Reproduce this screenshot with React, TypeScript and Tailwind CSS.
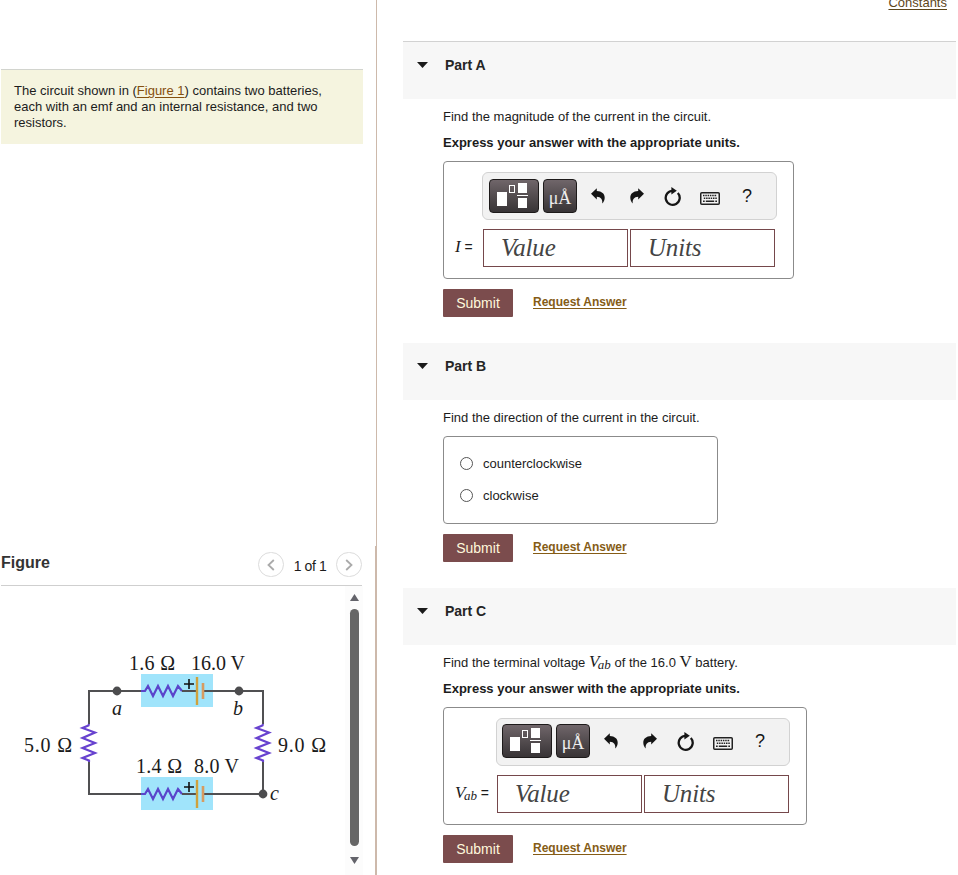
import { useState, type ReactNode } from "react";

const UndoIcon = ({ flip = false }: { flip?: boolean }) => (
    <svg width="14" height="16" viewBox="0 0 14 16" className={flip ? "-scale-x-100" : ""} aria-hidden="true">
        <path d="M5.8 0.2V3.1C10.8 3.3 13.7 5.8 13.7 9.8C13.7 11.9 12.9 14 11.2 15.6C11.8 11.5 10 9 5.8 8.8V11.4L0 5.8Z" fill="#151515" />
    </svg>
);

const ResetIcon = () => (
    <svg width="18" height="19" viewBox="0 0 18 19" aria-hidden="true">
        <path d="M8.7 3.8A7 7 0 1 0 13.8 6" fill="none" stroke="#151515" strokeWidth="2.3" />
        <path d="M7.4 0L12.8 3.8L7.4 7.6Z" fill="#151515" />
    </svg>
);

const KeyboardIcon = () => (
    <svg width="20" height="13" viewBox="0 0 20 13" aria-hidden="true">
        <rect x="0.75" y="0.75" width="18.5" height="11.5" rx="1" fill="#f5f5f5" stroke="#222" strokeWidth="1.5" />
        <path d="M3 3.5H17M3.8 6.2H17" stroke="#222" strokeWidth="1.4" strokeDasharray="1.5 0.8" />
        <path d="M3 9.2H4.7M5.8 9.2H14.2M15.3 9.2H17" stroke="#222" strokeWidth="1.6" />
    </svg>
);

const TemplateIcon = () => (
    <svg width="34" height="28" viewBox="0 0 34 28" aria-hidden="true">
        <rect x="0" y="10" width="10" height="14" fill="#fff" />
        <rect x="12.5" y="3.5" width="5" height="7" fill="none" stroke="#fff" strokeWidth="1" />
        <path d="M21 1H30V11H21ZM20 13H31V14H20ZM21 16H30V26H21Z" fill="#fff" />
    </svg>
);

const Toolbar = ({ wide }: { wide: boolean }) => (
    <div className={`flex h-[48px] items-center rounded-md border border-[#d2d2d2] bg-[#f2f2f2] ${wide ? "w-[294px] pb-0.5 pl-[5px]" : "w-[295px] pl-1.5"}`}>
        <button type="button" className="flex h-[34px] w-[50px] items-center justify-center rounded border border-[#1d1a1a] bg-linear-to-b from-[#70666a] to-[#383436]">
            <TemplateIcon />
        </button>
        <button type="button" className="ml-1 flex h-[34px] w-[34px] items-center justify-center rounded border border-[#1d1a1a] bg-linear-to-b from-[#70666a] to-[#383436] pt-1 font-['Liberation_Serif',serif] text-[18px] leading-none text-[#eee]">
            μÅ
        </button>
        <button type="button" className="ml-[14px]"><UndoIcon /></button>
        <button type="button" className="ml-[25px]"><UndoIcon flip /></button>
        <button type="button" className="ml-[20px]"><ResetIcon /></button>
        <button type="button" className="ml-[18px] pt-1"><KeyboardIcon /></button>
        <button type="button" className="ml-[22px] text-[18px] leading-none text-[#151515]">?</button>
    </div>
);

const AnswerBox = ({ label, wide = false }: { label: ReactNode; wide?: boolean }) => (
    <div className={`flex h-[118px] rounded border border-[#8b8b8b] pt-[10px] ${wide ? "w-[364px]" : "w-[351px]"}`}>
        <div className={`shrink-0 pt-[65px] pl-[11px] text-[14px] leading-[20px] ${wide ? "w-[52px]" : "w-[38px]"}`}>
            {label}
        </div>
        <div>
            <Toolbar wide={wide} />
            <div className="mt-[9px] ml-px flex gap-0.5 font-['Liberation_Serif',serif] text-[25px] italic leading-[36px] tracking-[-0.2px] text-[#444]">
                <div className="h-[38px] w-[145px] border border-[#75484b] bg-white pl-[17px]">Value</div>
                <div className="h-[38px] w-[145px] border border-[#75484b] bg-white pl-[17px]">Units</div>
            </div>
        </div>
    </div>
);

const SubmitRow = () => (
    <div className="mt-[10px] flex h-[28px] items-center gap-5">
        <button type="button" className="h-[28px] w-[70px] rounded-[1px] bg-[#7b4c4d] text-[14px] text-[#fff8dc]">Submit</button>
        <a href="#" className="-mt-0.5 text-[12px] font-bold text-[#855c16] underline underline-offset-2">Request Answer</a>
    </div>
);

const Part = ({ title, first = false, children }: { title: string; first?: boolean; children: ReactNode }) => (
    <section>
        <div className={`mr-0.5 flex bg-[#f7f7f7] pt-[13px] pl-[14px] ${first ? "h-[58px] border-t border-[#d2d2d2]" : "h-[57px]"}`}>
            <svg width="11" height="6" viewBox="0 0 11 6" className="mt-[7px]" aria-hidden="true">
                <path d="M0 0H11L5.5 6Z" fill="#1b1b1b" />
            </svg>
            <h2 className="ml-[17px] text-[14px] font-bold leading-[20px] text-[#252525]">{title}</h2>
        </div>
        <div className="pl-10 text-[13px] leading-[16px] text-[#1c1c1c]">{children}</div>
    </section>
);

const Vab = () => (
    <span className="inline-flex h-[16px] items-baseline font-['Liberation_Serif',serif] text-[17px] italic leading-[16px]">
        <span className="tracking-[-1.5px]">V</span>
        <span className="mt-[3px] text-[13px] leading-[16px] [transform:translateY(2px)]">ab</span>
    </span>
);

const Branch = ({ y }: { y: number }) => (
    <g>
        <rect x="141" y={y - 17} width="72" height="33" fill="#a0e4fb" />
        <path d={`M141 ${y}H145L148 ${y - 5}L153 ${y + 5}L158 ${y - 5}L163 ${y + 5}L168 ${y - 5}L173 ${y + 5}L178 ${y - 5}L182 ${y}`} fill="none" stroke="#5a45cb" strokeWidth="2.2" />
        <path d={`M182 ${y}H196M204 ${y}H213`} stroke="#505052" strokeWidth="2" />
        <path d={`M184 ${y - 7}H194M189 ${y - 12}V${y - 2}`} stroke="#111" strokeWidth="1.6" />
        <path d={`M197 ${y - 14}V${y + 14}`} stroke="#cfa13d" strokeWidth="2.4" />
        <path d={`M203 ${y - 8}V${y + 8}`} stroke="#d79b60" strokeWidth="2.6" />
    </g>
);

const Circuit = () => (
    <svg width="345" height="289" viewBox="0 586 345 289" role="img" aria-label="Circuit with two batteries and two resistors">
        <g fill="none" stroke="#505052" strokeWidth="2">
            <path d="M141 691H89V724M89 762V794H141M213 691H263V724M263 762V794H213" />
        </g>
        <g fill="none" stroke="#6843cf" strokeWidth="2.2">
            <path d="M89 724L88.5 725.5L82.5 728L95 732.5L82.5 738L95 743L82.5 748L95 753L82.5 758L89 760.5V762" />
            <path d="M263 724L262.5 725.5L256.5 728L269 732.5L256.5 738L269 743L256.5 748L269 753L256.5 758L263 760.5V762" />
        </g>
        <Branch y={691} />
        <Branch y={794} />
        <g fill="#4c4c4e">
            <circle cx="117" cy="691" r="4.4" />
            <circle cx="239" cy="691" r="4.4" />
            <circle cx="263" cy="794" r="4.4" />
        </g>
        <g className="font-['Liberation_Serif',serif] text-[20px]" fill="#1b1b1b">
            <text x="129" y="670" textLength="46">1.6 Ω</text>
            <text x="191" y="670" textLength="54">16.0 V</text>
            <text x="24" y="752" textLength="48">5.0 Ω</text>
            <text x="278" y="752" textLength="48">9.0 Ω</text>
            <text x="136" y="773" textLength="46">1.4 Ω</text>
            <text x="194" y="773" textLength="45">8.0 V</text>
            <g className="italic">
                <text x="112" y="715">a</text>
                <text x="233" y="715">b</text>
                <text x="270" y="800">c</text>
            </g>
        </g>
    </svg>
);

const PagerButton = ({ next = false }: { next?: boolean }) => (
    <button type="button" className="flex h-[25px] w-[26px] items-center justify-center rounded-full border border-[#dcdcdc]" aria-label={next ? "Next figure" : "Previous figure"}>
        <svg width="8" height="12" viewBox="0 0 8 12" aria-hidden="true" className={next ? "-scale-x-100" : ""}>
            <path d="M6.8 1L1.5 6L6.8 11" fill="none" stroke="#aaa" strokeWidth="1.8" />
        </svg>
    </button>
);

const App = () => {
    const [direction, setDirection] = useState<string>("");

    return (
        <main className="flex h-[875px] w-[958px] overflow-hidden bg-white font-['Liberation_Sans',Arial,sans-serif] text-[13px] text-[#1c1c1c]">
            <aside className="flex h-full w-[375px] shrink-0 flex-col">
                <div className="mt-[69px] ml-px h-[75px] w-[362px] border-t border-[#d2d4ce] bg-[#f5f4df] px-[13px] pt-[13px] leading-[16px]">
                    The circuit shown in (<a href="#" className="text-[#85500f] underline underline-offset-2">Figure 1</a>) contains two batteries,
                    <br />each with an emf and an internal resistance, and two
                    <br />resistors.
                </div>
                <div className="mt-[402px] ml-px flex h-[40px] w-[361px] items-start border-b border-[#cfcfcf]">
                    <h2 className="grow pt-[7px] text-[16px] font-bold leading-[20px] text-[#333]">Figure</h2>
                    <div className="flex items-center pt-[6px]">
                        <PagerButton />
                        <span className="w-[52px] pt-[3px] text-center text-[14px] tracking-[-0.4px]">1 of 1</span>
                        <PagerButton next />
                    </div>
                </div>
                <div className="flex h-[289px]">
                    <Circuit />
                    <div className="flex w-[18px] flex-col items-center bg-[#fcfcfc] pt-[8px]">
                        <svg width="9" height="7" viewBox="0 0 9 7" aria-hidden="true"><path d="M0 7L4.5 0L9 7Z" fill="#63636a" /></svg>
                        <div className="mt-[8px] h-[237px] w-[9px] rounded-full bg-[#666]" />
                        <svg width="9" height="7" viewBox="0 0 9 7" className="mt-[11px]" aria-hidden="true"><path d="M0 0H9L4.5 7Z" fill="#63636a" /></svg>
                    </div>
                </div>
            </aside>

            <div className="flex w-[2px] shrink-0 flex-col items-end">
                <div className="h-[546px] w-px bg-[#cdb9ab]" />
                <div className="w-[2px] grow bg-[#cdb9ab]" />
            </div>

            <div className="ml-[26px] grow">
                <div className="flex h-[41px] justify-end pr-[11px]">
                    <a href="#" className="-mt-[5px] h-[16px] leading-[16px] text-[#5d461b] underline underline-offset-2">Constants</a>
                </div>

                <Part title="Part A" first>
                    <p className="pt-[10px]">Find the magnitude of the current in the circuit.</p>
                    <p className="mt-[10px] mb-[10px] font-bold">Express your answer with the appropriate units.</p>
                    <AnswerBox label={<><i className="font-['Liberation_Serif',serif] text-[17px]">I</i> =</>} />
                    <SubmitRow />
                </Part>

                <div className="mt-[26px]">
                    <Part title="Part B">
                        <p className="pt-[10px]">Find the direction of the current in the circuit.</p>
                        <div className="mt-[10px] flex h-[88px] w-[275px] flex-col gap-4 rounded border border-[#8b8b8b] pt-[19px] pl-[16px]">
                            {
                                ["counterclockwise", "clockwise"].map((option) => (
                                    <label className="flex h-[16px] items-center gap-[10px]" key={option}>
                                        <input type="radio" name="direction" className="-mt-px h-[13px] w-[13px] appearance-none rounded-full border border-[#555] bg-white checked:border-4" checked={direction === option} onChange={() => setDirection(option)} />
                                        {option}
                                    </label>
                                ))
                            }
                        </div>
                        <SubmitRow />
                    </Part>
                </div>

                <div className="mt-[26px]">
                    <Part title="Part C">
                        <p className="flex h-[26px] items-baseline gap-[3.6px] whitespace-nowrap pt-[7px]">
                            <span>Find the terminal voltage</span>
                            <Vab />
                            <span>of the 16.0</span>
                            <span className="font-['Liberation_Serif',serif] text-[17px] leading-[16px]">V</span>
                            <span>battery.</span>
                        </p>
                        <p className="mt-[10px] mb-[10px] font-bold">Express your answer with the appropriate units.</p>
                        <AnswerBox label={<><Vab /> =</>} wide />
                        <SubmitRow />
                    </Part>
                </div>
            </div>
        </main>
    );
};

export default App;
